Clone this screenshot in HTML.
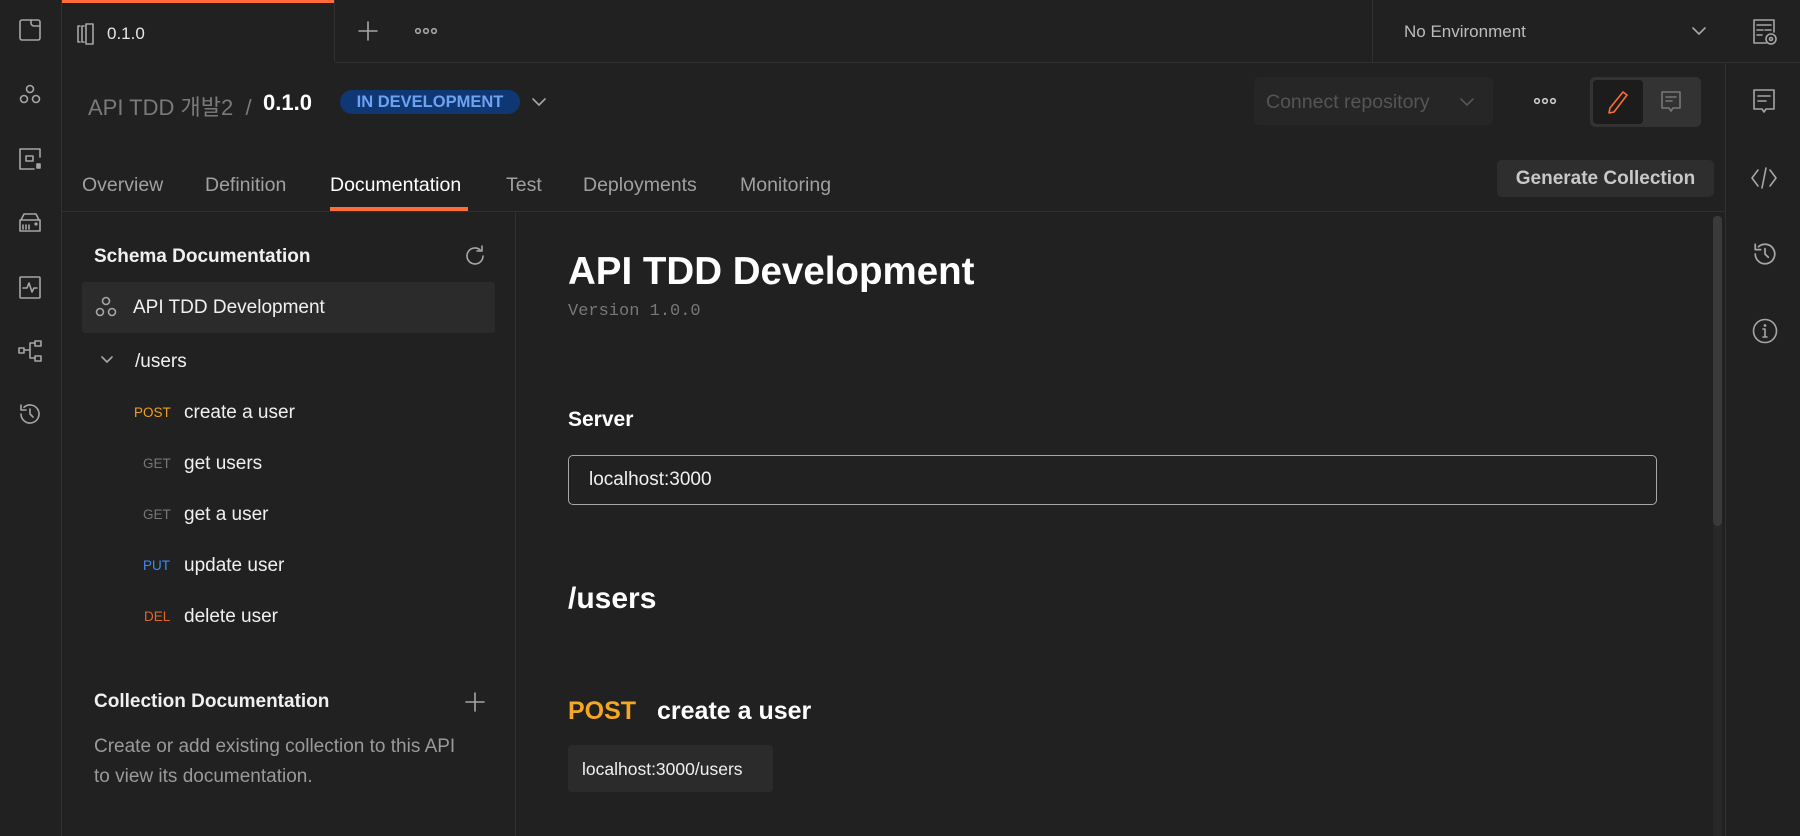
<!DOCTYPE html>
<html><head><meta charset="utf-8"><style>
*{margin:0;padding:0;box-sizing:border-box}
body{width:1800px;height:836px;background:#212121;font-family:"Liberation Sans","Noto Sans CJK KR",sans-serif;color:#e6e6e6;position:relative;overflow:hidden}
.a{position:absolute;white-space:nowrap}
svg{position:absolute;fill:none;stroke:#a6a6a6;stroke-width:1.6;stroke-linecap:round;stroke-linejoin:round}
.vl{position:absolute;background:#303030}
</style></head><body>
<div class="vl" style="left:61px;top:0;width:1px;height:836px"></div>
<div class="vl" style="left:334px;top:0;width:1px;height:62px"></div>
<div class="vl" style="left:1372px;top:0;width:1px;height:62px"></div>
<div class="vl" style="left:335px;top:62px;width:1465px;height:1px"></div>
<div class="vl" style="left:1725px;top:62px;width:1px;height:774px"></div>
<div class="vl" style="left:62px;top:211px;width:1663px;height:1px"></div>
<div class="vl" style="left:515px;top:212px;width:1px;height:624px"></div>
<div class="a" style="left:62px;top:0;width:272px;height:3px;background:#ff6c37"></div>

<svg style="left:19px;top:19px" width="22" height="22" viewBox="0 0 22 22"><rect x="1" y="1" width="20" height="20" rx="2"/><path d="M12 1v3a3 3 0 0 0 3 3h6"/></svg>
<svg style="left:18px;top:84px" width="24" height="22" viewBox="0 0 24 22"><circle cx="12" cy="5" r="3.5"/><circle cx="6" cy="15" r="3.5"/><circle cx="18" cy="15" r="3.5"/></svg>
<svg style="left:19px;top:147px" width="22" height="24" viewBox="0 0 22 24"><path d="M21 10V2H1v20h14"/><rect x="7" y="9" width="7" height="5"/><rect x="18" y="17" width="3" height="4" fill="#a6a6a6"/></svg>
<svg style="left:18px;top:212px" width="24" height="22" viewBox="0 0 24 22"><path d="M3 8L6 2h12l3 6M2 8h20v11H2z"/><path d="M5 13v4M8 13v4M11 13v4"/><circle cx="18" cy="12" r=".8"/></svg>
<svg style="left:19px;top:276px" width="22" height="24" viewBox="0 0 22 24"><rect x="1" y="1" width="20" height="21" rx="1"/><path d="M4 12h4l2-5 3 9 2-4h3"/></svg>
<svg style="left:17px;top:339px" width="26" height="24" viewBox="0 0 26 24"><rect x="2" y="9" width="5" height="5"/><rect x="18" y="2" width="6" height="5"/><rect x="18" y="17" width="6" height="5"/><path d="M7 11h6V4h5M13 11v8h5"/></svg>
<svg style="left:18px;top:402px" width="24" height="24" viewBox="0 0 24 24"><path d="M3 12a9 9 0 1 0 3-6.7"/><path d="M3 3v5h5"/><path d="M12 7v5l3 3"/></svg>

<svg style="left:77px;top:23px" width="22" height="22" viewBox="0 0 22 22"><path d="M3 3H1v16h2M7 3H5v16h2"/><rect x="9" y="1" width="7" height="20"/></svg>
<div class="a" style="left:107px;top:24px;font-size:17px;color:#e6e6e6">0.1.0</div>
<svg style="left:358px;top:21px" width="20" height="20" viewBox="0 0 20 20"><path d="M10 1v18M1 10h18"/></svg>
<svg style="left:414px;top:27px" width="24" height="8" viewBox="0 0 24 8"><circle cx="4" cy="4" r="2.3"/><circle cx="12" cy="4" r="2.3"/><circle cx="20" cy="4" r="2.3"/></svg>
<div class="a" style="left:1404px;top:22px;font-size:17px;color:#bdbdbd">No Environment</div>
<svg style="left:1692px;top:27px" width="14" height="8" viewBox="0 0 14 8"><path d="M1 1l6 6 6-6"/></svg>
<svg style="left:1752px;top:18px" width="26" height="28" viewBox="0 0 26 28"><path d="M14 25H2V2h20v12"/><path d="M5 7h14M5 12h6M13 12h6M5 17h5"/><circle cx="19" cy="21" r="5"/><circle cx="19" cy="21" r="1.5"/></svg>

<div class="a" style="left:88px;top:90px;font-size:22px;color:#7a7a7a">API TDD 개발2 &nbsp;/ </div>
<div class="a" style="left:263px;top:90px;font-size:22px;font-weight:bold;color:#fff">0.1.0</div>
<div class="a" style="left:340px;top:90px;width:180px;height:24px;border-radius:12px;background:#0e3774;color:#6ea2f0;font-size:16.5px;font-weight:bold;text-align:center;line-height:24px">IN DEVELOPMENT</div>
<svg style="left:532px;top:98px" width="14" height="8" viewBox="0 0 14 8"><path d="M1 1l6 6 6-6"/></svg>
<div class="a" style="left:1254px;top:77px;width:239px;height:48px;border-radius:5px;background:#262626"></div>
<div class="a" style="left:1266px;top:91px;font-size:19.5px;color:#555">Connect repository</div>
<svg style="left:1460px;top:98px;stroke:#555" width="14" height="8" viewBox="0 0 14 8"><path d="M1 1l6 6 6-6"/></svg>
<svg style="left:1533px;top:97px;stroke:#ccc" width="24" height="8" viewBox="0 0 24 8"><circle cx="4" cy="4" r="2.3"/><circle cx="12" cy="4" r="2.3"/><circle cx="20" cy="4" r="2.3"/></svg>
<div class="a" style="left:1590px;top:77px;width:111px;height:50px;border-radius:5px;background:#333"></div>
<div class="a" style="left:1593px;top:80px;width:50px;height:44px;border-radius:4px;background:#1c1c1c"></div>
<svg style="left:1607px;top:90px;stroke:#ff6c37" width="22" height="24" viewBox="0 0 22 24"><path d="M16 2l4 3L7 22l-5 1 1-5z"/></svg>
<svg style="left:1660px;top:90px;stroke:#777" width="22" height="24" viewBox="0 0 22 24"><path d="M2 2h18v16h-7l-2 3-2-3H2z"/><path d="M6 7h10M6 11h6"/></svg>

<div class="a" style="left:82px;top:174px;font-size:19.5px;color:#a0a0a0">Overview</div>
<div class="a" style="left:205px;top:174px;font-size:19.5px;color:#a0a0a0">Definition</div>
<div class="a" style="left:330px;top:174px;font-size:19.5px;color:#fff">Documentation</div>
<div class="a" style="left:506px;top:174px;font-size:19.5px;color:#a0a0a0">Test</div>
<div class="a" style="left:583px;top:174px;font-size:19.5px;color:#a0a0a0">Deployments</div>
<div class="a" style="left:740px;top:174px;font-size:19.5px;color:#a0a0a0">Monitoring</div>
<div class="a" style="left:330px;top:207px;width:138px;height:4px;background:#ff6c37"></div>
<div class="a" style="left:1497px;top:160px;width:217px;height:37px;border-radius:5px;background:#2e2e2e;color:#c8c8c8;font-size:19px;font-weight:bold;line-height:37px;text-align:center">Generate Collection</div>

<svg style="left:1752px;top:88px" width="24" height="28" viewBox="0 0 24 28"><path d="M2 2h20v19h-8l-2 3-2-3H2z"/><path d="M6 8h12M6 13h8"/></svg>
<svg style="left:1750px;top:166px" width="28" height="24" viewBox="0 0 28 24"><path d="M8 4L2 12l6 8M20 4l6 8-6 8M16 2l-4 20"/></svg>
<svg style="left:1752px;top:241px" width="26" height="26" viewBox="0 0 24 24"><path d="M3 12a9 9 0 1 0 3-6.7"/><path d="M3 3v5h5"/><path d="M12 7v5l3 3"/></svg>
<svg style="left:1752px;top:318px" width="26" height="26" viewBox="0 0 26 26"><circle cx="13" cy="13" r="11.5"/><path d="M13 11v8M11 19h4M11 11h2"/><circle cx="13" cy="7.5" r=".6"/></svg>

<div class="a" style="left:94px;top:246px;font-size:19px;font-weight:bold;color:#f0f0f0">Schema Documentation</div>
<svg style="left:463px;top:244px" width="24" height="24" viewBox="0 0 24 24"><path d="M20 12a8 8 0 1 1-3-6.3"/><path d="M19 2v5h-5"/></svg>
<div class="a" style="left:82px;top:282px;width:413px;height:51px;border-radius:3px;background:#2b2b2b"></div>
<svg style="left:94px;top:295px" width="24" height="24" viewBox="0 0 24 22"><circle cx="12" cy="5" r="3.5"/><circle cx="6" cy="16" r="3.5"/><circle cx="18" cy="16" r="3.5"/></svg>
<div class="a" style="left:133px;top:297px;font-size:19px;color:#f0f0f0">API TDD Development</div>
<svg style="left:101px;top:356px" width="12" height="8" viewBox="0 0 12 8"><path d="M1 1l5 5 5-5"/></svg>
<div class="a" style="left:135px;top:351px;font-size:19px;color:#f0f0f0">/users</div>
<div class="a" style="left:134px;top:405px;font-size:13.5px;color:#f0a020">POST</div>
<div class="a" style="left:184px;top:402px;font-size:19px;color:#f0f0f0">create a user</div>
<div class="a" style="left:143px;top:456px;font-size:13.5px;color:#777">GET</div>
<div class="a" style="left:184px;top:453px;font-size:19px;color:#f0f0f0">get users</div>
<div class="a" style="left:143px;top:507px;font-size:13.5px;color:#777">GET</div>
<div class="a" style="left:184px;top:504px;font-size:19px;color:#f0f0f0">get a user</div>
<div class="a" style="left:143px;top:558px;font-size:13.5px;color:#3d8af7">PUT</div>
<div class="a" style="left:184px;top:555px;font-size:19px;color:#f0f0f0">update user</div>
<div class="a" style="left:144px;top:609px;font-size:13.5px;color:#e0652a">DEL</div>
<div class="a" style="left:184px;top:606px;font-size:19px;color:#f0f0f0">delete user</div>
<div class="a" style="left:94px;top:691px;font-size:19px;font-weight:bold;color:#f0f0f0">Collection Documentation</div>
<svg style="left:465px;top:692px" width="20" height="20" viewBox="0 0 20 20"><path d="M10 1v18M1 10h18"/></svg>
<div class="a" style="left:94px;top:732px;font-size:19px;color:#9a9a9a;line-height:30px">Create or add existing collection to this API<br>to view its documentation.</div>

<div class="a" style="left:568px;top:250px;font-size:38.5px;font-weight:bold;color:#fff">API TDD Development</div>
<div class="a" style="left:568px;top:302px;font-size:17px;font-family:'Liberation Mono',monospace;color:#777">Version 1.0.0</div>
<div class="a" style="left:568px;top:408px;font-size:21px;font-weight:bold;color:#fff">Server</div>
<div class="a" style="left:568px;top:455px;width:1089px;height:50px;border:1.5px solid #a8a8a8;border-radius:5px"></div>
<div class="a" style="left:589px;top:469px;font-size:19px;color:#f0f0f0">localhost:3000</div>
<div class="a" style="left:568px;top:582px;font-size:30px;font-weight:bold;color:#fff">/users</div>
<div class="a" style="left:568px;top:697px;font-size:25px;font-weight:bold;color:#f5a623">POST</div>
<div class="a" style="left:657px;top:697px;font-size:25px;font-weight:bold;color:#fff">create a user</div>
<div class="a" style="left:568px;top:745px;width:205px;height:47px;border-radius:4px;background:#2b2b2b"></div>
<div class="a" style="left:582px;top:759px;font-size:17.5px;color:#f0f0f0">localhost:3000/users</div>
<div class="a" style="left:1713px;top:216px;width:9px;height:310px;border-radius:4px;background:#3a3a3a"></div>
<div class="a" style="left:1713px;top:526px;width:9px;height:310px;background:#282828"></div>
</body></html>
